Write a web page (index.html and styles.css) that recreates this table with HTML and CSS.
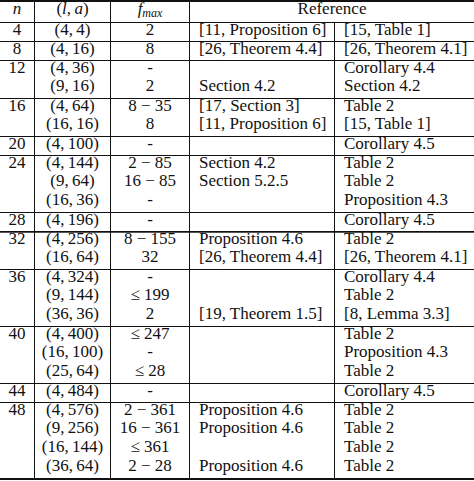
FILE: index.html
```html
<!DOCTYPE html>
<html>
<head>
<meta charset="utf-8">
<link rel="stylesheet" href="styles.css">
</head>
<body>
<table class="tbl">
  <colgroup>
    <col class="c-n"><col class="c-la"><col class="c-f"><col class="c-r1"><col class="c-r2">
  </colgroup>
  <thead>
    <tr class="head">
      <th class="ctr"><i>n</i></th>
      <th class="ctr vl">(<i>l</i>,&#8201;<i>a</i>)</th>
      <th class="ctr vl"><i>f</i><sub class="sub">max</sub></th>
      <th class="ctr vl" colspan="2">Reference</th>
    </tr>
  </thead>
  <tbody>
    <tr class="g"><td class="ctr">4</td><td class="ctr vl">(4,&#8201;4)</td><td class="ctr vl">2</td><td class="ref vl">[11, Proposition 6]</td><td class="ref vl">[15, Table 1]</td></tr>
    <tr class="g"><td class="ctr">8</td><td class="ctr vl">(4,&#8201;16)</td><td class="ctr vl">8</td><td class="ref vl">[26, Theorem 4.4]</td><td class="ref vl">[26, Theorem 4.1]</td></tr>
    <tr class="g"><td class="ctr">12</td><td class="ctr vl">(4,&#8201;36)</td><td class="ctr vl">-</td><td class="ref vl"></td><td class="ref vl">Corollary 4.4</td></tr>
    <tr><td class="ctr"></td><td class="ctr vl">(9,&#8201;16)</td><td class="ctr vl">2</td><td class="ref vl">Section 4.2</td><td class="ref vl">Section 4.2</td></tr>
    <tr class="g"><td class="ctr">16</td><td class="ctr vl">(4,&#8201;64)</td><td class="ctr vl">8 &#8722; 35</td><td class="ref vl">[17, Section 3]</td><td class="ref vl">Table 2</td></tr>
    <tr><td class="ctr"></td><td class="ctr vl">(16,&#8201;16)</td><td class="ctr vl">8</td><td class="ref vl">[11, Proposition 6]</td><td class="ref vl">[15, Table 1]</td></tr>
    <tr class="g"><td class="ctr">20</td><td class="ctr vl">(4,&#8201;100)</td><td class="ctr vl">-</td><td class="ref vl"></td><td class="ref vl">Corollary 4.5</td></tr>
    <tr class="g"><td class="ctr">24</td><td class="ctr vl">(4,&#8201;144)</td><td class="ctr vl">2 &#8722; 85</td><td class="ref vl">Section 4.2</td><td class="ref vl">Table 2</td></tr>
    <tr><td class="ctr"></td><td class="ctr vl">(9,&#8201;64)</td><td class="ctr vl">16 &#8722; 85</td><td class="ref vl">Section 5.2.5</td><td class="ref vl">Table 2</td></tr>
    <tr><td class="ctr"></td><td class="ctr vl">(16,&#8201;36)</td><td class="ctr vl">-</td><td class="ref vl"></td><td class="ref vl">Proposition 4.3</td></tr>
    <tr class="g"><td class="ctr">28</td><td class="ctr vl">(4,&#8201;196)</td><td class="ctr vl">-</td><td class="ref vl"></td><td class="ref vl">Corollary 4.5</td></tr>
    <tr class="g g2"><td class="ctr">32</td><td class="ctr vl">(4,&#8201;256)</td><td class="ctr vl">8 &#8722; 155</td><td class="ref vl">Proposition 4.6</td><td class="ref vl">Table 2</td></tr>
    <tr><td class="ctr"></td><td class="ctr vl">(16,&#8201;64)</td><td class="ctr vl">32</td><td class="ref vl">[26, Theorem 4.4]</td><td class="ref vl">[26, Theorem 4.1]</td></tr>
    <tr class="g"><td class="ctr">36</td><td class="ctr vl">(4,&#8201;324)</td><td class="ctr vl">-</td><td class="ref vl"></td><td class="ref vl">Corollary 4.4</td></tr>
    <tr><td class="ctr"></td><td class="ctr vl">(9,&#8201;144)</td><td class="ctr vl">&#8804; 199</td><td class="ref vl"></td><td class="ref vl">Table 2</td></tr>
    <tr><td class="ctr"></td><td class="ctr vl">(36,&#8201;36)</td><td class="ctr vl">2</td><td class="ref vl">[19, Theorem 1.5]</td><td class="ref vl">[8, Lemma 3.3]</td></tr>
    <tr class="g"><td class="ctr">40</td><td class="ctr vl">(4,&#8201;400)</td><td class="ctr vl">&#8804; 247</td><td class="ref vl"></td><td class="ref vl">Table 2</td></tr>
    <tr><td class="ctr"></td><td class="ctr vl">(16,&#8201;100)</td><td class="ctr vl">-</td><td class="ref vl"></td><td class="ref vl">Proposition 4.3</td></tr>
    <tr><td class="ctr"></td><td class="ctr vl">(25,&#8201;64)</td><td class="ctr vl">&#8804; 28</td><td class="ref vl"></td><td class="ref vl">Table 2</td></tr>
    <tr class="g"><td class="ctr">44</td><td class="ctr vl">(4,&#8201;484)</td><td class="ctr vl">-</td><td class="ref vl"></td><td class="ref vl">Corollary 4.5</td></tr>
    <tr class="g"><td class="ctr">48</td><td class="ctr vl">(4,&#8201;576)</td><td class="ctr vl">2 &#8722; 361</td><td class="ref vl">Proposition 4.6</td><td class="ref vl">Table 2</td></tr>
    <tr><td class="ctr"></td><td class="ctr vl">(9,&#8201;256)</td><td class="ctr vl">16 &#8722; 361</td><td class="ref vl">Proposition 4.6</td><td class="ref vl">Table 2</td></tr>
    <tr><td class="ctr"></td><td class="ctr vl">(16,&#8201;144)</td><td class="ctr vl">&#8804; 361</td><td class="ref vl"></td><td class="ref vl">Table 2</td></tr>
    <tr class="last"><td class="ctr"></td><td class="ctr vl">(36,&#8201;64)</td><td class="ctr vl">2 &#8722; 28</td><td class="ref vl">Proposition 4.6</td><td class="ref vl">Table 2</td></tr>
  </tbody>
</table>
</body>
</html>
```
FILE: styles.css
```css
html, body {
  margin: 0;
  padding: 0;
  background: #ffffff;
}

body {
  font-family: "Liberation Serif", "Times New Roman", serif;
  font-size: 17px;
  color: #111111;
}

.tbl {
  width: 474px;
  table-layout: fixed;
  border-collapse: separate;
  border-spacing: 0;
}

.c-n { width: 34px; }
.c-la { width: 76px; }
.c-f { width: 79px; }
.c-r1 { width: 145px; }
.c-r2 { width: 140px; }

.tbl th,
.tbl td {
  box-sizing: border-box;
  padding: 0;
  height: 19px;
  line-height: 14px;
  vertical-align: top;
  white-space: nowrap;
  font-weight: normal;
}

.tbl .head th {
  height: 22px;
  border-top: 2px solid #111111;
}

.tbl .g td {
  border-top: 1px solid #111111;
}

.tbl .g2 td {
  box-shadow: inset 0 1px 0 #555555;
}

.tbl .last td {
  border-bottom: 2px solid #111111;
  height: 21px;
}

.tbl .vl {
  border-left: 1px solid #111111;
}

.tbl .ctr {
  text-align: center;
}

.tbl .ref {
  text-align: left;
  padding-left: 9px;
}

.sub {
  font-style: italic;
  font-size: 12px;
  line-height: 0;
  vertical-align: -3px;
}
```
